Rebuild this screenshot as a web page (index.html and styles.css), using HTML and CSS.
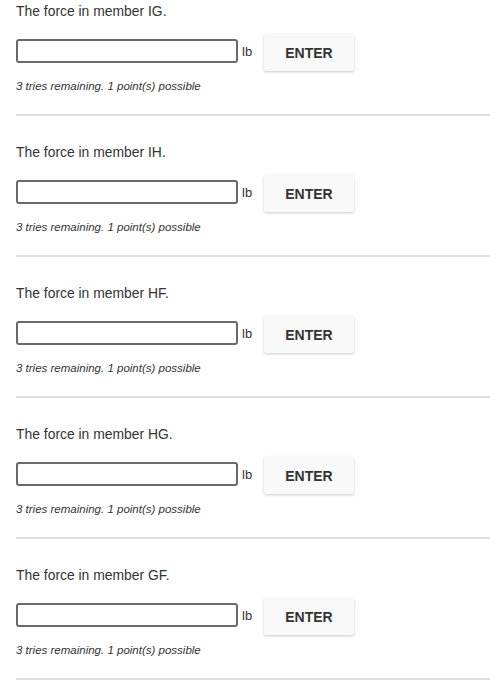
FILE: index.html
```html
<!DOCTYPE html>
<html>
<head>
<meta charset="utf-8">
<link rel="stylesheet" href="styles.css">
</head>
<body>
<div class="list">
  <div class="q">
    <div class="title">The force in member IG.</div>
    <div class="row"><div class="input"></div><span class="unit">lb</span><button class="btn">ENTER</button></div>
    <div class="tries">3 tries remaining. 1 point(s) possible</div>
  </div>
  <div class="q">
    <div class="title">The force in member IH.</div>
    <div class="row"><div class="input"></div><span class="unit">lb</span><button class="btn">ENTER</button></div>
    <div class="tries">3 tries remaining. 1 point(s) possible</div>
  </div>
  <div class="q">
    <div class="title">The force in member HF.</div>
    <div class="row"><div class="input"></div><span class="unit">lb</span><button class="btn">ENTER</button></div>
    <div class="tries">3 tries remaining. 1 point(s) possible</div>
  </div>
  <div class="q">
    <div class="title">The force in member HG.</div>
    <div class="row"><div class="input"></div><span class="unit">lb</span><button class="btn">ENTER</button></div>
    <div class="tries">3 tries remaining. 1 point(s) possible</div>
  </div>
  <div class="q">
    <div class="title">The force in member GF.</div>
    <div class="row"><div class="input"></div><span class="unit">lb</span><button class="btn">ENTER</button></div>
    <div class="tries">3 tries remaining. 1 point(s) possible</div>
  </div>
</div>
</body>
</html>
```
FILE: styles.css
```css
html, body {
  margin: 0;
  padding: 0;
  background: #fff;
}
body {
  font-family: "Liberation Sans", Arial, sans-serif;
  color: #333;
}
.list {
  padding: 3px 0 0 16px;
}
.q {
  border-bottom: 2px solid #dedede;
  padding-bottom: 20.5px;
  margin-bottom: 28.5px;
}
.title {
  font-size: 13.9px;
  line-height: 16px;
  height: 16px;
}
.row {
  display: flex;
  align-items: flex-start;
  margin-top: 15px;
  height: 37px;
}
.input {
  box-sizing: border-box;
  width: 222px;
  height: 24px;
  margin-top: 5px;
  border: 2px solid #6a6a6a;
  border-radius: 3px;
  background: #fff;
}
.unit {
  font-size: 13px;
  line-height: 16px;
  margin: 10px 0 0 4px;
  width: 13px;
}
.btn {
  margin-left: 9px;
  width: 90px;
  height: 37px;
  border: none;
  border-radius: 2px;
  background: #f9f9f9;
  box-shadow: 0 1px 3px rgba(0,0,0,0.22);
  font-family: "Liberation Sans", Arial, sans-serif;
  font-weight: bold;
  font-size: 14px;
  color: #333;
  padding: 0;
}
.tries {
  margin-top: 8px;
  font-size: 11.5px;
  line-height: 14px;
  font-style: italic;
  color: #333;
}
```
